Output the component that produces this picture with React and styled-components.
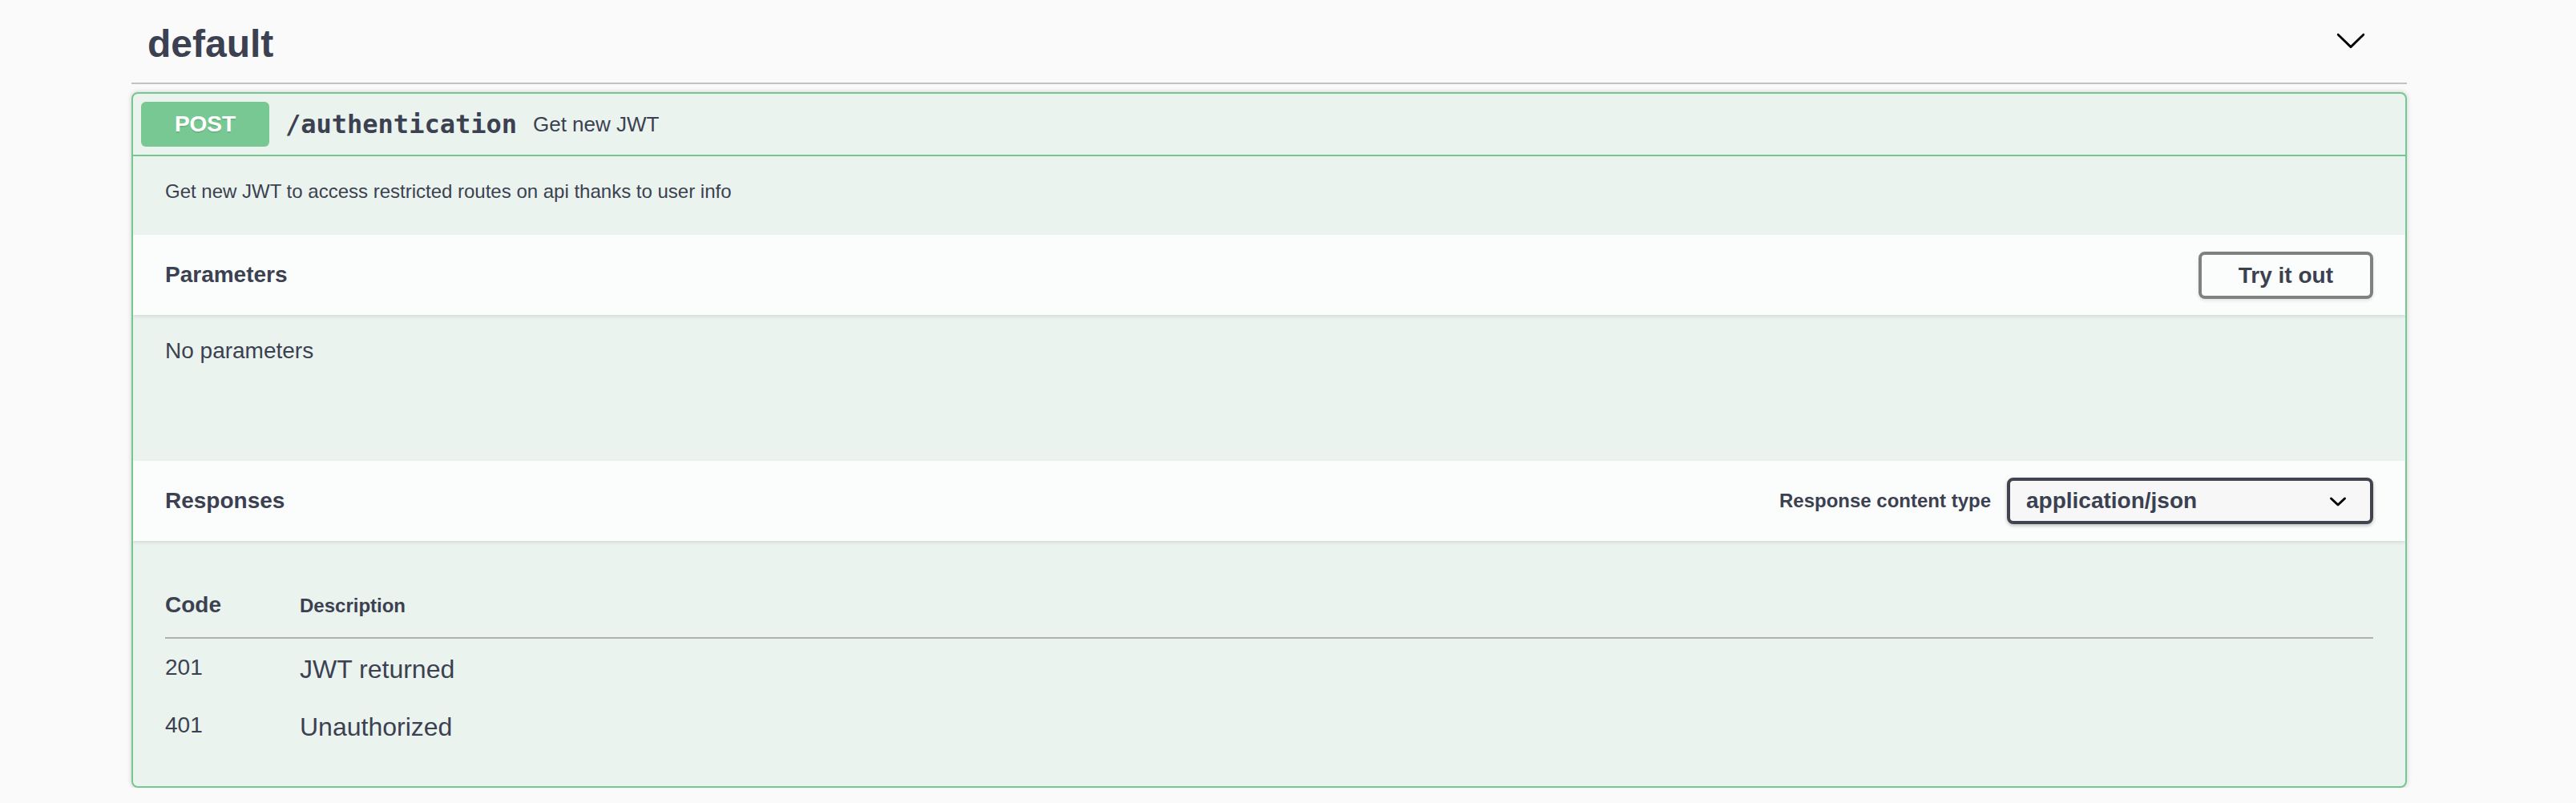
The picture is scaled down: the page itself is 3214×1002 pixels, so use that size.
import React from "react";
import styled, { createGlobalStyle } from "styled-components";

const GlobalStyle = createGlobalStyle`
  html, body {
    margin: 0;
    padding: 0;
    background: #fafafa;
  }
  body {
    font-family: "Liberation Sans", Arial, sans-serif;
    color: #3b4151;
  }
  *, *::before, *::after {
    box-sizing: border-box;
  }
`;

const Page = styled.div`
  width: 3214px;
  padding: 0 211px 0 164px;
`;

const TagSection = styled.section`
  display: flex;
  flex-direction: column;
`;

const TagHeader = styled.div`
  display: flex;
  align-items: center;
  height: 105px;
  padding: 5px 40px 0 20px;
  border-bottom: 2px solid rgba(59, 65, 81, 0.3);
  margin-bottom: 10px;
`;

const TagTitle = styled.h3`
  flex: 1;
  margin: 0;
  font-size: 48px;
  font-weight: 700;
  line-height: normal;
  color: #3b4151;
`;

const ToggleButton = styled.button`
  display: flex;
  background: none;
  border: none;
  padding: 0 10px;
  margin-bottom: 8px;
  cursor: pointer;
`;

const Opblock = styled.div`
  border: 2px solid #74c791;
  border-radius: 8px;
  background: #ebf3ee;
  box-shadow: 0 0 6px rgba(0, 0, 0, 0.19);
  overflow: hidden;
`;

const Summary = styled.div`
  display: flex;
  align-items: center;
  padding: 10px;
  border-bottom: 2px solid #74c791;
`;

const MethodBadge = styled.span`
  min-width: 160px;
  padding: 12px 0;
  text-align: center;
  font-size: 28px;
  line-height: 32px;
  font-weight: 700;
  color: #fff;
  background: #78c893;
  border-radius: 6px;
  text-shadow: 0 2px 0 rgba(0, 0, 0, 0.1);
`;

const PathText = styled.span`
  padding: 0 20px;
  font-family: "DejaVu Sans Mono", "Liberation Mono", monospace;
  font-size: 32px;
  font-weight: 700;
  color: #3b4151;
`;

const SummaryText = styled.span`
  font-size: 26px;
  color: #3b4151;
`;

const DescriptionWrap = styled.div`
  padding: 20px 40px;
  p {
    margin: 10px 0 20px;
    font-size: 24px;
    line-height: 28px;
  }
`;

const SectionHeader = styled.div`
  position: relative;
  display: flex;
  align-items: center;
  min-height: 100px;
  padding: 0 40px;
  background: rgba(255, 255, 255, 0.8);
  box-shadow: 0 2px 4px rgba(0, 0, 0, 0.1);
`;

const SectionTitle = styled.h4`
  flex: 1;
  margin: 0;
  font-size: 28px;
  font-weight: 700;
  color: #3b4151;
`;

const TryButton = styled.button`
  padding: 10px 46px;
  font-family: "Liberation Sans", Arial, sans-serif;
  font-size: 28px;
  line-height: 31px;
  font-weight: 700;
  color: #3b4151;
  background: transparent;
  border: 4px solid #808080;
  border-radius: 8px;
  box-shadow: 0 2px 4px rgba(0, 0, 0, 0.1);
  cursor: pointer;
`;

const ParamsBody = styled.div`
  min-height: 182px;
  padding: 20px 40px;
  p {
    margin: 9px 0 0;
    font-size: 28px;
    line-height: 32px;
  }
`;

const ContentTypeLabel = styled.label`
  margin-right: 20px;
  font-size: 24px;
  font-weight: 700;
  color: #3b4151;
`;

const SelectBox = styled.div`
  display: flex;
  align-items: center;
  justify-content: space-between;
  width: 457px;
  height: 58px;
  padding: 0 20px;
  font-size: 28px;
  font-weight: 700;
  color: #3b4151;
  background: #f7f7f7;
  border: 4px solid #41444e;
  border-radius: 8px;
  box-shadow: 0 2px 4px rgba(0, 0, 0, 0.25);
`;

const ResponsesBody = styled.div`
  padding: 40px;
`;

const Table = styled.table`
  width: 100%;
  border-collapse: collapse;
`;

const HeadCell = styled.th`
  text-align: left;
  padding: 24px 0;
  vertical-align: baseline;
  border-bottom: 2px solid rgba(59, 65, 81, 0.2);
  font-size: ${(p) => (p.$wide ? "28px" : "24px")};
  font-weight: 700;
  color: #3b4151;
  width: ${(p) => (p.$wide ? "168px" : "auto")};
`;

const StatusCell = styled.td`
  padding: 20px 0 0;
  vertical-align: top;
  font-size: 28px;
  line-height: 32px;
  color: #3b4151;
`;

const DescCell = styled.td`
  padding: 20px 0 0;
  vertical-align: top;
  p {
    margin: 0 0 15px;
    font-size: 32px;
    color: #3b4151;
  }
`;

const TagArrow = () => (
  <svg width="40" height="40" viewBox="0 0 20 20" aria-hidden="true">
    <path
      fill="#000"
      d="M17.418 6.109c.272-.268.709-.268.979 0s.271.701 0 .969l-7.908 7.83c-.27.268-.707.268-.979 0l-7.908-7.83c-.27-.268-.27-.701 0-.969.271-.268.709-.268.979 0L10 13.25l7.418-7.141z"
    />
  </svg>
);

const SelectArrow = () => (
  <svg width="40" height="40" viewBox="0 0 40 40" aria-hidden="true">
    <path
      d="M11.5 17 L20 25 L28.5 17"
      fill="none"
      stroke="#000"
      strokeWidth="3"
      strokeLinecap="round"
      strokeLinejoin="round"
    />
  </svg>
);

const responses = [
  { code: "201", description: "JWT returned" },
  { code: "401", description: "Unauthorized" },
];

export default function App() {
  return (
    <>
      <GlobalStyle />
      <Page>
        <TagSection>
          <TagHeader>
            <TagTitle>default</TagTitle>
            <ToggleButton aria-label="Collapse operation">
              <TagArrow />
            </ToggleButton>
          </TagHeader>

          <Opblock>
            <Summary>
              <MethodBadge>POST</MethodBadge>
              <PathText>/authentication</PathText>
              <SummaryText>Get new JWT</SummaryText>
            </Summary>

            <DescriptionWrap>
              <p>Get new JWT to access restricted routes on api thanks to user info</p>
            </DescriptionWrap>

            <SectionHeader>
              <SectionTitle>Parameters</SectionTitle>
              <TryButton>Try it out</TryButton>
            </SectionHeader>
            <ParamsBody>
              <p>No parameters</p>
            </ParamsBody>

            <SectionHeader>
              <SectionTitle>Responses</SectionTitle>
              <ContentTypeLabel>Response content type</ContentTypeLabel>
              <SelectBox role="combobox" aria-label="Response content type">
                <span>application/json</span>
                <SelectArrow />
              </SelectBox>
            </SectionHeader>
            <ResponsesBody>
              <Table>
                <thead>
                  <tr>
                    <HeadCell $wide>Code</HeadCell>
                    <HeadCell>Description</HeadCell>
                  </tr>
                </thead>
                <tbody>
                  {responses.map((r) => (
                    <tr key={r.code}>
                      <StatusCell>{r.code}</StatusCell>
                      <DescCell>
                        <p>{r.description}</p>
                      </DescCell>
                    </tr>
                  ))}
                </tbody>
              </Table>
            </ResponsesBody>
          </Opblock>
        </TagSection>
      </Page>
    </>
  );
}
